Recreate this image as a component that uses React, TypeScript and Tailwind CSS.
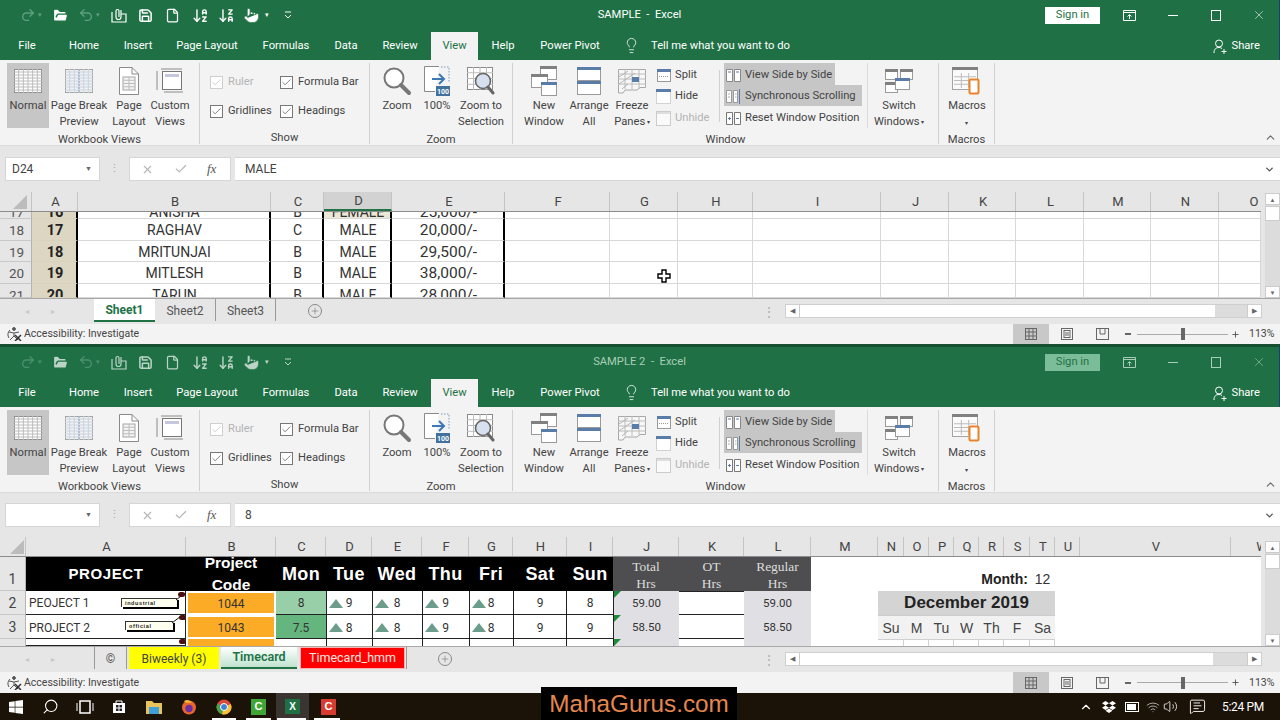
import React from "react";
import { Undo2, Redo2, FolderOpen, Save, File, ArrowDownAZ, ArrowDownZA, Pointer, Lightbulb, Search, Plus, ChevronDown, ChevronUp, Wifi, Volume2, MessageSquareText, X as XIcon, Check } from "lucide-react";
import { FaWindows, FaDropbox } from "react-icons/fa";

const blue = "#5a7ca8";

function Lines({ x, y, w, h, nx, ny, c = "#bcbcbc" }: any) {
  const out: any[] = [];
  for (let i = 1; i < nx; i++) out.push(<path key={"v" + i} d={`M${x + (w * i) / nx} ${y}V${y + h}`} stroke={c} />);
  for (let i = 1; i < ny; i++) out.push(<path key={"h" + i} d={`M${x} ${y + (h * i) / ny}H${x + w}`} stroke={c} />);
  return <>{out}</>;
}
const NormalIco = () => (
  <svg width="28" height="24" viewBox="0 0 28 24"><rect x=".5" y=".5" width="27" height="23" fill="#fff" stroke="#8f8f8f" /><Lines x={0} y={0} w={28} h={24} nx={6} ny={8} /></svg>
);
const BreakIco = () => (
  <svg width="28" height="24" viewBox="0 0 28 24"><rect x=".5" y=".5" width="27" height="23" fill="#eef2f7" stroke="#a4a4a4" /><Lines x={0} y={0} w={28} h={24} nx={6} ny={8} c="#ccd3db" /><path d="M14 0V24" stroke="#8ba3c2" strokeDasharray="2 1" /></svg>
);
const LayoutIco = () => (
  <svg width="20" height="28" viewBox="0 0 20 28"><path d="M.5.5H13L19.5 7V27.5H.5Z" fill="#fff" stroke="#8a8a8a" /><path d="M13 .5V7H19.5" fill="none" stroke="#8a8a8a" /><rect x="4" y="10" width="12" height="13" fill="#f3f3f3" stroke="#a4a4a4" /><Lines x={4} y={10} w={12} h={13} nx={2} ny={4} /></svg>
);
const CustomIco = () => (
  <svg width="28" height="26" viewBox="0 0 28 26"><path d="M1 3V22M5 1H26M27 24H8" stroke="#8a8a8a" fill="none" /><rect x="6.5" y="3.5" width="19" height="18" fill="#fff" stroke="#777" /><rect x="9" y="6" width="14" height="3" fill="#c4c7de" /></svg>
);
const ZoomIco = () => (
  <svg width="30" height="30" viewBox="0 0 30 30"><circle cx="12" cy="12" r="9.5" fill="#fff" stroke="#777" strokeWidth="2" /><path d="M19 19L27 27" stroke="#777" strokeWidth="4" strokeLinecap="round" /></svg>
);
const HundredIco = () => (
  <svg width="26" height="30" viewBox="0 0 26 30"><path d="M15 .5H.5V25.5H11" fill="#fff" stroke="#8a8a8a" /><path d="M17 1H25V17" fill="none" stroke="#7b97b8" strokeDasharray="1.5 1.5" /><path d="M8 13H20M15 8L20 13L15 18" fill="none" stroke="#3c78b5" strokeWidth="2" /><rect x="12" y="20" width="14" height="10" fill="#41719c" /><text x="19" y="28" textAnchor="middle" fontSize="7" fontWeight="700" fill="#fff">100</text></svg>
);
const SelIco = () => (
  <svg width="28" height="28" viewBox="0 0 28 28"><rect x=".5" y=".5" width="25" height="22" fill="#fff" stroke="#8a8a8a" /><Lines x={0} y={0} w={26} h={23} nx={4} ny={4} /><circle cx="16" cy="14" r="7.5" fill="#d6e0ee" stroke="#666" strokeWidth="1.6" /><path d="M21 20L26 26" stroke="#666" strokeWidth="3" strokeLinecap="round" /></svg>
);
const Win = ({ x, y, w, h, c = "#808080" }: any) => (
  <g><rect x={x + 0.5} y={y + 0.5} width={w} height={h} fill="#fff" stroke="#9a9a9a" /><rect x={x} y={y} width={w + 1} height="3" fill={c} /></g>
);
const NewWinIco = () => (
  <svg width="27" height="30" viewBox="0 0 27 30"><Win x={9} y={0} w={16} h={13} /><Win x={0} y={8} w={16} h={13} /><Win x={10} y={16} w={15} h={13} c={blue} /></svg>
);
const ArrangeIco = () => (
  <svg width="24" height="28" viewBox="0 0 24 28"><Win x={0} y={0} w={23} h={13} c={blue} /><Win x={0} y={14} w={23} h={13} c={blue} /></svg>
);
const FreezeIco = () => (
  <svg width="28" height="25" viewBox="0 0 28 25"><path d="M.5.5H27.5V18.5H22L19 21H7L5 24H.5Z" fill="#f7f7f7" stroke="#a8a8a8" /><Lines x={0} y={0} w={28} h={20} nx={4} ny={4} /><path d="M1 8L10 2M1 15L17 4M4 20L10 15" stroke="#b4b4b4" /><rect x="14" y="8" width="7" height="5" fill={blue} /></svg>
);
const SplitIco = () => (
  <svg width="14" height="13" viewBox="0 0 14 13"><rect x=".5" y=".5" width="13" height="12" fill="#fff" stroke="#9a9a9a" /><rect width="14" height="3" fill={blue} /><path d="M2 7.5H12" stroke="#999" strokeDasharray="1 1" /></svg>
);
const HideIco = () => (
  <svg width="15" height="15" viewBox="0 0 15 15"><rect x=".5" y=".5" width="14" height="14" fill="#fff" stroke="#aaa" strokeDasharray="1 1" /><rect width="15" height="3" fill={blue} /></svg>
);
const UnhideIco = () => (
  <svg width="15" height="15" viewBox="0 0 15 15"><rect x=".5" y=".5" width="14" height="14" fill="#fafafa" stroke="#cccccc" /><rect x="1" y="1" width="13" height="2" fill="#dedede" /></svg>
);
const SideIco = () => (
  <svg width="15" height="13" viewBox="0 0 15 13"><path d="M.5.5H6.5V12.5H.5ZM8.5.5H14.5V12.5H8.5Z" fill="#fff" stroke="#888" /><path d="M2 3H5M10 3H13" stroke={blue} /></svg>
);
const SyncIco = () => (
  <svg width="15" height="15" viewBox="0 0 15 15"><path d="M.5 1.5H5.5V13.5H.5ZM7.5 1.5H11.5V13.5H7.5Z" fill="#fff" stroke="#999" /><path d="M2 5H4M2 8H4M9 5H10.5M9 8H10.5" stroke="#aaa" /><path d="M13.5 0V15" stroke={blue} /></svg>
);
const ResetIco = () => (
  <svg width="15" height="13" viewBox="0 0 15 13"><path d="M.5.5H6.5V12.5H.5ZM8.5.5H14.5V12.5H8.5Z" fill="#fff" stroke="#777" /><path d="M2 6.5H5M3.5 5V8M10 6.5H13" stroke={blue} /></svg>
);
const SwitchIco = () => (
  <svg width="28" height="25" viewBox="0 0 28 25"><Win x={0} y={0} w={12} h={10} /><Win x={15} y={0} w={12} h={10} /><Win x={0} y={13} w={12} h={10} /><Win x={10} y={9} w={14} h={11} c={blue} /></svg>
);
const MacroIco = () => (
  <svg width="30" height="28" viewBox="0 0 30 28"><rect x=".5" y=".5" width="25" height="22" fill="#fafafa" stroke="#a4a4a4" /><rect width="26" height="3" fill="#808080" /><Lines x={2} y={6} w={22} h={15} nx={3} ny={4} /><rect x="17.5" y="12.5" width="9" height="14" rx="1" fill="#fff" stroke="#e8842a" strokeWidth="2" /></svg>
);

function Btn({ w, ml = 0, icon, lines, active, arrow, drop }: any) {
  return (
    <div className={`shrink-0 flex flex-col items-center h-[65px] pt-[3px] ${active ? "bg-[#c6c6c6]" : ""}`} style={{ width: w, marginLeft: ml }}>
      <div className="h-[30px] shrink-0 flex items-center justify-center">{icon}</div>
      <div className="shrink-0 mt-[2px] text-center text-[11.2px] leading-[15.5px] text-[#444] whitespace-nowrap">
        <div>{lines[0]}</div>
        <div>{lines[1]}{arrow && <span className="text-[6px] align-middle"> ▾</span>}{drop && <span className="text-[6px]">▾</span>}</div>
      </div>
    </div>
  );
}
function Group({ w, label, children }: any) {
  return (
    <div className="shrink-0 flex flex-col h-[81px] mt-[3px] border-r border-[#d0d0d0]" style={{ width: w }}>
      <div className="flex h-[65px]">{children}</div>
      <div className="h-[14px] mt-[5px] text-center text-[11.2px] leading-[14px] text-[#444]">{label}</div>
    </div>
  );
}
function Chk({ label, off }: any) {
  return (
    <div className={`flex items-center gap-[5px] text-[11.2px] ${off ? "text-[#b4b4b4]" : "text-[#444]"}`}>
      <span className={`w-[13px] h-[13px] border flex items-center justify-center bg-white ${off ? "border-[#cfcfcf]" : "border-[#777]"}`}>
        <Check size={11} strokeWidth={1.6} color={off ? "#c0c0c0" : "#555"} />
      </span>
      {label}
    </div>
  );
}
function Small({ icon, label, off, active, w }: any) {
  return (
    <div className={`h-[21.5px] pt-[3px] flex items-center gap-[4px] text-[11.2px] whitespace-nowrap ${off ? "text-[#b4b4b4]" : "text-[#444]"} ${active ? "bg-[#c6c6c6]" : ""}`} style={{ width: w }}>
      <span className="w-[15px] flex justify-center ml-[2px]">{icon}</span>
      {label}
    </div>
  );
}

function Ribbon() {
  return (
    <div className="flex h-[86px] bg-[#f3f3f3] border-b border-[#dadada]">
      <Group w={200} label="Workbook Views">
        <Btn w={42} ml={7} active icon={<NormalIco />} lines={["Normal", ""]} />
        <Btn w={54} ml={3} icon={<BreakIco />} lines={["Page Break", "Preview"]} />
        <Btn w={42} ml={2} icon={<LayoutIco />} lines={["Page", "Layout"]} />
        <Btn w={40} icon={<CustomIco />} lines={["Custom", "Views"]} />
      </Group>
      <Group w={170} label="Show">
        <div className="grid grid-cols-[70px_auto] grid-rows-[29px_29px] items-center pl-[10px] pt-[5px]">
          <Chk off label="Ruler" />
          <Chk label="Formula Bar" />
          <Chk label="Gridlines" />
          <Chk label="Headings" />
        </div>
      </Group>
      <Group w={143} label="Zoom">
        <Btn w={40} ml={7} icon={<ZoomIco />} lines={["Zoom", ""]} />
        <Btn w={40} icon={<HundredIco />} lines={["100%", ""]} />
        <Btn w={48} icon={<SelIco />} lines={["Zoom to", "Selection"]} />
      </Group>
      <Group w={426} label="Window">
        <Btn w={42} ml={10} icon={<NewWinIco />} lines={["New", "Window"]} />
        <Btn w={46} ml={1} icon={<ArrangeIco />} lines={["Arrange", "All"]} />
        <Btn w={40} icon={<FreezeIco />} lines={["Freeze", "Panes"]} arrow />
        <div className="w-[65px] ml-[2px] shrink-0 flex flex-col">
          <Small icon={<SplitIco />} label="Split" />
          <Small icon={<HideIco />} label="Hide" />
          <Small off icon={<UnhideIco />} label="Unhide" />
        </div>
        <div className="w-px h-[52px] mt-[7px] bg-[#d0d0d0] shrink-0 mr-[4px]" />
        <div className="w-[144px] shrink-0 flex flex-col border-r border-[#dcdcdc]">
          <Small active w={111} icon={<SideIco />} label="View Side by Side" />
          <Small active w={138} icon={<SyncIco />} label="Synchronous Scrolling" />
          <Small icon={<ResetIco />} label="Reset Window Position" />
        </div>
        <Btn w={48} ml={7} icon={<SwitchIco />} lines={["Switch", "Windows"]} arrow />
      </Group>
      <Group w={56} label="Macros">
        <Btn w={56} icon={<MacroIco />} lines={["Macros", ""]} drop />
      </Group>
      <div className="flex-1 flex items-end justify-end pr-[3px] pb-[1px]">
        <ChevronUp size={13} color="#666" />
      </div>
    </div>
  );
}

const tabs: [string, number][] = [["File", 54], ["Home", 60], ["Insert", 48], ["Page Layout", 90], ["Formulas", 68], ["Data", 52], ["Review", 56]];

function TitleBars({ title, dim }: any) {
  const c = dim ? "#a9cdb8" : "#ffffff";
  const q = dim ? 0.7 : 1;
  return (
    <div className="bg-[#1f7145] border-r border-[#1d3f6b]">
      <div className="h-[30px] grid grid-cols-[1fr_auto_1fr] items-center">
        <div className="flex items-center pl-[20px]" style={{ opacity: q }}>
          <Redo2 size={16} color="#5f9f7f" />
          <span className="text-[7px] text-[#5f9f7f] w-[6px] ml-[2px]">▾</span>
          <FolderOpen size={17} fill="#fff" color="#1f7145" className="ml-[8px]" />
          <Undo2 size={16} color="#5f9f7f" className="ml-[9px]" />
          <span className="text-[7px] text-[#5f9f7f] w-[6px] ml-[2px]">▾</span>
          <svg width="16" height="16" viewBox="0 0 16 16" className="ml-[9px]" fill="none" stroke="#fff" strokeWidth="1.2"><path d="M1 5V15H15V7H10" /><path d="M8 10V4a1.5 1.5 0 0 0-3 0V10a2.5 2.5 0 0 0 5 0V3" /></svg>
          <Save size={15} color="#fff" strokeWidth={2.4} className="ml-[11px]" />
          <File size={15} color="#fff" className="ml-[12px]" />
          <ArrowDownAZ size={17} color="#fff" className="ml-[12px]" />
          <ArrowDownZA size={17} color="#fff" className="ml-[9px]" />
          <Pointer size={17} fill="#fff" color="#1f7145" strokeWidth={1} className="ml-[8px]" />
          <span className="text-[7px] text-white w-[6px] ml-[5px]">▾</span>
          <svg width="8" height="8" viewBox="0 0 8 8" className="ml-[13px]" fill="none" stroke="#fff"><path d="M1 1H7M1 4L4 7L7 4" /></svg>
        </div>
        <div className="text-[11.2px] whitespace-pre pt-[1px]" style={{ color: c }}>{title}</div>
        <div className="flex items-center justify-end" style={{ color: c }}>
          <div className={`w-[55px] h-[17px] mr-[5px] flex items-center justify-center text-[11.2px] ${dim ? "bg-[#7cbd99] text-[#1f7145]" : "bg-white text-[#1f7145]"}`}>Sign in</div>
          <div className="w-[48px] flex justify-center">
            <svg width="13" height="11" viewBox="0 0 13 11" fill="none" stroke="currentColor"><path d="M.5.5H12.5V10.5H.5ZM.5 2.5H12.5M6.5 9V5M4.5 6.5L6.5 4.5L8.5 6.5" /></svg>
          </div>
          <div className="w-[40px] flex justify-center"><div className="w-[10px] h-px bg-current" /></div>
          <div className="w-[46px] flex justify-center"><div className="w-[10px] h-[11px] border border-current" /></div>
          <div className="w-[40px] flex justify-center"><XIcon size={14} strokeWidth={1} /></div>
        </div>
      </div>
      <div className="h-[30px] flex items-end text-white text-[11.2px]">
        {tabs.map(([t, w]) => (
          <div key={t} className="h-full flex items-center justify-center pt-[2px]" style={{ width: w }}>{t}</div>
        ))}
        <div className="ml-[3px] w-[47px] h-[28px] bg-[#f3f3f3] text-[#1f7145] flex items-center justify-center">View</div>
        <div className="w-[50px] h-full flex items-center justify-center pt-[2px]">Help</div>
        <div className="w-[84px] h-full flex items-center justify-center pt-[2px]">Power Pivot</div>
        <div className="w-[39px] h-full flex items-center justify-center pt-[1px]"><Lightbulb size={17} strokeWidth={1.1} /></div>
        <div className="h-full flex items-center flex-1 pt-[2px]">Tell me what you want to do</div>
        <div className="h-full flex items-center pr-[19px] gap-[4px] pt-[2px]">
          <svg width="14" height="15" viewBox="0 0 14 15" fill="none" stroke="#fff"><circle cx="6" cy="4.5" r="3.5" /><path d="M1 14C1 10 3 8.5 6 8.5C7 8.5 8 8.7 9 9.5M11 10V15M8.5 12.5H13.5" /></svg>
          Share
        </div>
      </div>
    </div>
  );
}

function FormulaBar({ name, value, pt, pb }: any) {
  return (
    <div className="bg-[#e6e6e6] flex" style={{ paddingTop: pt, paddingBottom: pb }}>
      <div className="ml-[5px] w-[95px] h-[24px] bg-white border border-[#d6d6d6] flex items-center justify-between pl-[6px] pr-[7px] text-[12px] text-[#444]">
        <span>{name}</span><span className="text-[7px] text-[#666]">▼</span>
      </div>
      <div className="w-[29px] flex items-center justify-center text-[#aaa] text-[11px] tracking-tighter">⋮</div>
      <div className="w-[102px] h-[24px] bg-white border border-[#d6d6d6] flex items-center text-[#b5b5b5]">
        <XIcon size={13} className="ml-[11px]" />
        <Check size={14} className="ml-[20px]" />
        <span className="ml-[19px] text-[13px] italic text-[#555] [font-family:'Liberation_Serif',serif]">fx</span>
      </div>
      <div className="ml-[4px] flex-1 h-[24px] bg-white border-y border-[#d6d6d6] flex items-center justify-between pl-[10px] pr-[5px] text-[12px] text-[#444]">
        <span>{value}</span><ChevronDown size={11} color="#555" strokeWidth={3} />
      </div>
    </div>
  );
}

function VScroll({ up }: any) {
  return (
    <div className="w-[19px] shrink-0 bg-[#e6e6e6] flex flex-col pl-[4px]" style={{ paddingTop: up }}>
      <div className="h-[12px] bg-white border border-[#ccc] flex items-center justify-center text-[6px] text-[#666]">▲</div>
      <div className="flex-1 flex flex-col bg-[#dcdcdc]">
        <div className="h-[15px] mt-[1px] bg-white border border-[#ccc]" />
      </div>
      <div className="h-[12px] bg-white border border-[#ccc] flex items-center justify-center text-[6px] text-[#666]">▼</div>
    </div>
  );
}

function SheetBar({ children, thumb }: any) {
  return (
    <div className="h-[26px] bg-[#e6e6e6] border-t border-[#a8a8a8] flex text-[12px]">
      <div className="w-[94px] shrink-0 flex items-center text-[#c8c8c8] text-[8px]">
        <span className="ml-[25px]">◂</span><span className="ml-[22px]">▸</span>
      </div>
      {children}
      <div className="flex-1" />
      <div className="w-[16px] mr-[8px] flex items-center justify-center text-[#aaa]">⋮</div>
      <div className="w-[477px] h-[14px] mt-[5px] flex bg-[#dcdcdc] border border-[#cfcfcf]">
        <div className="w-[14px] bg-white border-r border-[#ccc] flex items-center justify-center text-[7px] text-[#666]">◀</div>
        <div className="bg-white" style={{ width: thumb }} />
        <div className="flex-1" />
        <div className="w-[14px] bg-white border-l border-[#ccc] flex items-center justify-center text-[7px] text-[#666]">▶</div>
      </div>
      <div className="w-[18px]" />
    </div>
  );
}

function PlusCircle({ ml }: any) {
  return (
    <div className="mt-[5px] w-[14px] h-[14px] rounded-full border border-[#888] flex items-center justify-center text-[#777]" style={{ marginLeft: ml }}>
      <Plus size={10} strokeWidth={1.5} />
    </div>
  );
}

function StatusBar({ h }: any) {
  return (
    <div className="bg-[#f3f3f3] flex items-center text-[10.5px] text-[#444]" style={{ height: h }}>
      <svg width="16" height="14" viewBox="0 0 16 14" className="ml-[6px]" fill="none" stroke="#555"><circle cx="8" cy="2" r="1.4" fill="#555" /><path d="M3 5L8 6L13 5M8 6V9L4 13M8 9L12 13M4 3A6 6 0 0 0 3 11" /><path d="M9 8L15 14M15 8L9 14" stroke="#333" strokeWidth="1.5" /></svg>
      <span className="ml-[2px]">Accessibility: Investigate</span>
      <div className="flex-1" />
      <div className="w-[36px] h-full bg-[#c8c8c8] flex items-center justify-center">
        <svg width="12" height="12" viewBox="0 0 12 12"><rect x=".5" y=".5" width="11" height="11" fill="none" stroke="#666" /><Lines x={0} y={0} w={12} h={12} nx={3} ny={3} c="#666" /></svg>
      </div>
      <div className="w-[36px] flex justify-center">
        <svg width="12" height="12" viewBox="0 0 12 12" fill="none" stroke="#666"><rect x=".5" y=".5" width="11" height="11" /><rect x="3" y="2.5" width="6" height="7" /><path d="M4 5H8M4 7H8" /></svg>
      </div>
      <div className="w-[34px] flex justify-center">
        <svg width="13" height="12" viewBox="0 0 13 12" fill="none" stroke="#666"><rect x=".5" y=".5" width="12" height="11" /><path d="M4 .5V6H9V.5" /></svg>
      </div>
      <div className="w-[18px] flex justify-center"><div className="w-[6px] h-[2px] bg-[#666]" /></div>
      <div className="w-[91px] relative flex items-center"><div className="h-px w-full bg-[#aaa]" /><div className="absolute left-[44px] w-[4px] h-[12px] bg-[#666]" /></div>
      <div className="w-[14px] flex justify-center"><Plus size={9} color="#555" strokeWidth={2.5} /></div>
      <div className="w-[38px] pl-[7px] overflow-hidden whitespace-nowrap">113%</div>
    </div>
  );
}

function Header({ cols }: { cols: [string, number, boolean?][] }) {
  return (
    <div className="flex h-[20px] overflow-hidden bg-[#e6e6e6] border-b border-[#8c8c8c] text-[13px] text-[#444]">
      {cols.map(([n, w, hi], i) =>
        <div key={i} className={`shrink-0 overflow-hidden flex items-center justify-center pl-[2px] ${i === cols.length - 1 ? "" : "border-r border-[#c4c4c4]"} ${hi ? "bg-[#d2d2d2] border-b-2 border-b-[#217346]" : ""}`} style={{ width: w }}>
          {n === "" ? (
            <svg width="16" height="16" viewBox="0 0 16 16" className="ml-[6px]"><path d="M15 1V15H1Z" fill="#bcbcbc" /></svg>
          ) : n}
        </div>
      )}
    </div>
  );
}

const s1cols: [string, number, boolean?][] = [["", 32], ["A", 46], ["B", 193], ["C", 53], ["D", 68, true], ["E", 113], ["F", 105], ["G", 68], ["H", 75], ["I", 128], ["J", 68], ["K", 67], ["L", 68], ["M", 67], ["N", 68], ["O", 68]];
const s1rows: [string, string, string, string, string, string, number, string][] = [
  ["17", "16", "ANISHA", "B", "FEMALE", "25,000/-", 7, "end"],
  ["18", "17", "RAGHAV", "C", "MALE", "20,000/-", 22, "center"],
  ["19", "18", "MRITUNJAI", "B", "MALE", "29,500/-", 21, "center"],
  ["20", "19", "MITLESH", "B", "MALE", "38,000/-", 22, "center"],
  ["21", "20", "TARUN", "B", "MALE", "28,000/-", 14, "start"],
];

function C1({ w, h, al, children, cls = "" }: any) {
  const j = al === "end" ? "justify-end" : al === "start" ? "justify-start" : "justify-center";
  return (
    <div className={`shrink-0 overflow-hidden flex flex-col border-b ${j} ${cls}`} style={{ width: w, height: h }}>
      <div className={`h-[21px] shrink-0 leading-[21px] text-center whitespace-nowrap pl-[2px] ${al === "end" ? "-mb-[5px]" : al === "start" ? "mt-[1px]" : "pt-[1px]"}`}>{children}</div>
    </div>
  );
}

function Sheet1() {
  return (
    <div className="flex h-[106px]">
      <div className="w-[1261px] shrink-0">
        <Header cols={s1cols} />
        <div className="relative h-[86px] bg-white text-[14px] text-[#333] overflow-hidden">
          {s1rows.map(([rn, id, name, g, sex, sal, h, al]) => (
            <div key={rn} className="flex">
              <C1 w={32} h={h} al={al} cls="bg-[#e6e6e6] border-[#c8c8c8] border-r border-r-[#b4b4b4] text-[#555] text-[13.5px]">{rn}</C1>
              <C1 w={46} h={h} al={al} cls="bg-[#dcd6c3] border-b-[#d8d2bf] border-r-2 border-r-black font-bold text-[14.5px] text-[#222]">{id}</C1>
              <C1 w={193} h={h} al={al} cls="border-[#d8d8d8] border-r-2 border-r-black">{name}</C1>
              <C1 w={53} h={h} al={al} cls="border-[#d8d8d8] border-r-2 border-r-black">{g}</C1>
              <C1 w={68} h={h} al={al} cls={`border-[#d8d8d8] border-r-2 border-r-black ${rn === "17" ? "bg-[#ece8d8]" : ""}`}>{sex}</C1>
              <C1 w={113} h={h} al={al} cls="border-[#d8d8d8] border-r-2 border-r-black text-[15.5px]">{sal}</C1>
              {[105, 68, 75, 128, 68, 67, 68, 67, 68, 42].map((w, i) => (
                <div key={i} className="shrink-0 border-r border-b border-[#d8d8d8]" style={{ width: w, height: h }} />
              ))}
            </div>
          ))}
          <svg width="14" height="14" viewBox="0 0 14 14" className="absolute left-[657px] top-[57px]"><path d="M5 1H9V5H13V9H9V13H5V9H1V5H5Z" fill="#fff" stroke="#000" strokeWidth="1.4" /></svg>
        </div>
      </div>
      <VScroll up={1} />
    </div>
  );
}

const s2head: [string, number][] = [["", 26], ["A", 160], ["B", 90], ["C", 50], ["D", 46], ["E", 50], ["F", 47], ["G", 44], ["H", 54], ["I", 46], ["J", 66], ["K", 65], ["L", 67], ["M", 67], ["N", 26], ["O", 25], ["P", 25], ["Q", 25], ["R", 25], ["S", 26], ["T", 25], ["U", 25], ["V", 151], ["W", 60]];

const Tri = () => <svg width="14" height="9" viewBox="0 0 14 9" className="ml-[2px]"><path d="M7 0L14 9H0Z" fill="#6c9c8a" /></svg>;
const Corner = () => <svg width="7" height="7" viewBox="0 0 7 7" className="absolute left-0 top-0"><path d="M0 0H7L0 7Z" fill="#1f8a3c" /></svg>;

function Note({ label, left, top, w, dotLeft, dotTop }: any) {
  return (
    <>
      <div className="absolute h-[9px] bg-[#fffff0] border-t border-l border-[#333] shadow-[2px_2px_0_#000] text-[5.5px] leading-[8px] font-bold text-[#222] pl-[3px] tracking-[0.6px] [font-family:'Liberation_Sans',sans-serif]" style={{ left, top, width: w }}>{label}</div>
      <svg width="10" height="10" viewBox="0 0 10 10" className="absolute" style={{ left: left + w - 1, top: top - 6 }}><path d="M0 8L9 1" stroke="#111" /></svg>
      <div className="absolute w-[7px] h-[5px] bg-[#4a0f10] rounded-full" style={{ left: dotLeft, top: dotTop }} />
    </>
  );
}

function ARow({ label, note, cls = "" }: any) {
  return (
    <div className={`relative flex items-center pl-[3px] text-[12px] text-[#333] border-r border-b border-[#222] bg-white overflow-hidden ${cls}`}>
      {label}{note}
    </div>
  );
}

function Sheet2() {
  const vals = [
    { code: "1044", mon: "8", bg: "#98cfa9", mid: ["9", "8", "9", "8"], sat: "9", sun: "8", tot: "59.00", pad: "pt-[1px]" },
    { code: "1043", mon: "7.5", bg: "#65b57e", mid: ["8", "8", "9", "8"], sat: "9", sun: "9", tot: "58.50", pad: "pt-[2px]" },
  ];
  const days = ["Su", "M", "Tu", "W", "Th", "F", "Sa"];
  const head = "bg-black text-white font-bold flex items-center justify-center [font-family:'Liberation_Sans',sans-serif]";
  const head2 = "bg-[#4e4e50] text-[#ddd] text-[13.5px] leading-[17px] text-center flex flex-col justify-center pt-[2px] [font-family:'Liberation_Serif',serif]";
  return (
    <div className="flex h-[109px]">
      <div className="w-[1261px] shrink-0">
        <Header cols={s2head} />
        <div className="flex h-[89px] bg-white overflow-hidden">
          <div className="w-[26px] shrink-0 bg-[#e6e6e6] text-[14px] text-[#444] grid grid-rows-[34px_24px_24px_7px] border-r border-[#b4b4b4]">
            <div className="flex items-end justify-center border-b border-[#c8c8c8]">1</div>
            <div className="flex items-center justify-center border-b border-[#c8c8c8] pt-[1px]">2</div>
            <div className="flex items-center justify-center border-b border-[#c8c8c8] pt-[2px]">3</div>
            <div />
          </div>
          <div className="grid grid-cols-[160px_90px_50px_46px_50px_47px_44px_54px_46px_66px_65px_67px_67px_26px_25px_25px_25px_25px_26px_25px_25px_151px_30px] grid-rows-[34px_24px_24px_7px] text-[12px] text-[#333] overflow-hidden">
            <div className={`${head} text-[15px] tracking-[0.6px]`}>PROJECT</div>
            <div className={`${head} text-[15.5px] leading-[22px] flex-col text-center`}><span>Project</span><span>Code</span></div>
            {["Mon", "Tue", "Wed", "Thu", "Fri", "Sat", "Sun"].map((d) => <div key={d} className={`${head} text-[18px] tracking-[0.4px]`}>{d}</div>)}
            <div className={head2}><span>Total</span><span>Hrs</span></div>
            <div className={head2}><span>OT</span><span>Hrs</span></div>
            <div className={head2}><span>Regular</span><span>Hrs</span></div>
            <div />
            <div className="col-span-6 flex items-end justify-end pb-[1px] pr-[2px] font-bold text-[14px] text-[#222] [font-family:'Liberation_Sans',sans-serif]">Month:</div>
            <div className="flex items-end justify-center pb-[1px] text-[14px] text-[#333] [font-family:'Liberation_Sans',sans-serif]">12</div>
            <div /><div /><div />

            {vals.map((r, i) => (
              <React.Fragment key={i}>
                <ARow cls={r.pad} label={i === 0 ? "PEOJECT 1" : "PROJECT 2"} note={i === 0
                  ? <Note label="industrial" left={95} top={7} w={56} dotLeft={152} dotTop={1} />
                  : <Note label="official" left={99} top={6} w={48} dotLeft={153} dotTop={0} />} />
                <div className={`bg-[#fbab26] border-2 border-white flex items-center justify-center ${r.pad}`}>{r.code}</div>
                <div className={`border-b border-[#222] flex items-center justify-center ${r.pad}`} style={{ backgroundColor: r.bg }}>{r.mon}</div>
                {r.mid.map((v: string, j: number) => (
                  <div key={j} className={`grid grid-cols-[1fr_auto_1fr] items-center border-l border-b border-[#222] ${r.pad}`}><Tri /><span className="-ml-px">{v}</span><span /></div>
                ))}
                <div className={`border-x border-b border-[#222] flex items-center justify-center ${r.pad}`}>{r.sat}</div>
                <div className={`border-b border-[#222] flex items-center justify-center ${r.pad}`}>{r.sun}</div>
                <div className={`relative bg-[#e0e0e4] border-l border-[#222] flex items-center justify-center text-[11.5px] ${r.pad}`}><Corner />{r.tot}</div>
                <div className={`border-b border-[#222] ${i === 0 ? "border-t" : ""}`} />
                <div className={`bg-[#e0e0e4] flex items-center justify-center text-[11.5px] ${r.pad}`}>{r.tot}</div>
                <div />
                {i === 0 ? (
                  <div className="col-span-7 bg-[#d4d4d4] flex items-center justify-center font-bold text-[17px] text-[#222] [font-family:'Liberation_Sans',sans-serif]">December 2019</div>
                ) : (
                  days.map((d) => <div key={d} className="bg-[#f2f2f2] border-t border-[#ccc] flex items-center justify-center pt-[1px] text-[14px] text-[#444] [font-family:'Liberation_Sans',sans-serif]">{d}</div>)
                )}
                <div /><div /><div />
              </React.Fragment>
            ))}

            <ARow label="" note={<div className="absolute left-[153px] top-0 w-[7px] h-[5px] bg-[#4a0f10] rounded-full" />} />
            <div className="bg-[#fbab26] border-x-2 border-white" />
            <div />
            {[0, 1, 2, 3].map((i) => <div key={i} className="border-l border-[#222]" />)}
            <div className="border-x border-[#222]" />
            <div />
            <div className="relative bg-[#e0e0e4] border-l border-[#222]"><Corner /></div>
            <div />
            <div className="bg-[#e0e0e4]" />
            <div />
            {days.map((d) => <div key={d} className="border-t border-r border-[#d0d0d0]" />)}
            <div /><div /><div />
          </div>
        </div>
      </div>
      <VScroll up={4} />
    </div>
  );
}

function Tab({ w, ml = 0, cls = "", children }: any) {
  return <div className={`shrink-0 h-[22px] pt-[1px] flex items-center justify-center ${cls}`} style={{ width: w, marginLeft: ml }}>{children}</div>;
}

function Taskbar() {
  const under = "absolute bottom-0 h-[2px] bg-white";
  return (
    <div className="relative h-[27px] bg-[#1b1208] flex items-center text-white">
      <FaWindows size={16} className="ml-[8px]" />
      <Search size={17} strokeWidth={1.5} className="ml-[18px] -scale-x-100" />
      <svg width="18" height="14" viewBox="0 0 18 14" className="ml-[17px]" fill="none" stroke="#fff"><rect x="4" y="1" width="10" height="12" strokeWidth="1.5" /><path d="M1 3V11M17 3V11" /></svg>
      <svg width="14" height="15" viewBox="0 0 14 15" className="ml-[18px]"><path d="M1 4H13V14H1Z" fill="#fff" /><path d="M4 4V2H10V4" fill="none" stroke="#fff" /><rect x="4" y="6" width="2.5" height="2.5" fill="#222" /><rect x="7.5" y="6" width="2.5" height="2.5" fill="#222" /><rect x="4" y="9.5" width="2.5" height="2.5" fill="#222" /><rect x="7.5" y="9.5" width="2.5" height="2.5" fill="#222" /></svg>
      <svg width="16" height="14" viewBox="0 0 16 14" className="ml-[20px]"><path d="M0 1H6L8 3H16V14H0Z" fill="#e8c25a" /><rect x="3" y="7" width="10" height="7" fill="#3f9fd8" /></svg>
      <svg width="16" height="16" viewBox="0 0 16 16" className="ml-[19px]"><circle cx="8" cy="8.5" r="7" fill="#e8662a" /><circle cx="8" cy="9.5" r="3.7" fill="#6b2fa0" /><path d="M3 2C5 5 8 3 11 4C9 1 6 0 3 2Z" fill="#f7b733" /></svg>
      <svg width="16" height="16" viewBox="0 0 16 16" className="ml-[19px]"><circle cx="8" cy="8" r="7.5" fill="#d9493a" /><path d="M8 8L1.5 4.5A7.5 7.5 0 0 0 6 15.3Z" fill="#47a44a" /><path d="M8 8L14.8 5A7.5 7.5 0 0 1 6 15.3Z" fill="#f6c434" /><circle cx="8" cy="8" r="3.5" fill="#3f80d8" stroke="#fff" /></svg>
      <div className="ml-[19px] w-[15px] h-[16px] bg-[#3fa535] flex items-center justify-center text-[11px] font-bold [font-family:'Liberation_Sans',sans-serif]">C</div>
      <div className="ml-[10px] w-[33px] h-full bg-[#3a3530] flex items-center justify-center">
        <div className="w-[15px] h-[15px] bg-[#1f7145] flex items-center justify-center text-[10px] font-bold [font-family:'Liberation_Sans',sans-serif]">X</div>
      </div>
      <div className="ml-[12px] w-[15px] h-[16px] bg-[#d83b30] flex items-center justify-center text-[11px] font-bold [font-family:'Liberation_Sans',sans-serif]">C</div>
      <div className={`${under} left-[212px] w-[24px]`} />
      <div className={`${under} left-[246px] w-[25px]`} />
      <div className={`${under} left-[277px] w-[29px]`} />
      <div className={`${under} left-[314px] w-[26px]`} />
      <div className="flex-1" />
      <ChevronUp size={14} />
      <FaDropbox size={14} className="ml-[9px]" />
      <svg width="14" height="10" viewBox="0 0 14 10" className="ml-[9px]"><rect x=".5" y=".5" width="13" height="9" fill="none" stroke="#fff" /><rect x="2" y="2" width="9" height="6" fill="#fff" /></svg>
      <Wifi size={14} strokeWidth={1.5} className="ml-[7px] text-[#bbb]" />
      <Volume2 size={15} strokeWidth={1.3} className="ml-[3px]" />
      <MessageSquareText size={17} strokeWidth={1.3} className="ml-[11px]" />
      <div className="ml-[16px] mr-[16px] text-[12px] tracking-[-0.3px]">5:24 PM</div>
    </div>
  );
}

export default function App() {
  return (
    <div className="relative w-[1280px] h-[720px] overflow-hidden bg-[#e6e6e6] [font-family:Roboto,sans-serif]">
      <TitleBars title="SAMPLE  -  Excel" />
      <Ribbon />
      <FormulaBar name="D24" value="MALE" pt={11} pb={11} />
      <Sheet1 />
      <SheetBar thumb={415}>
        <Tab w={61} cls="bg-white text-[#217346] font-bold border-b-2 border-[#217346] h-[23px]">Sheet1</Tab>
        <Tab w={61} cls="text-[#555] border-r border-[#999]">Sheet2</Tab>
        <Tab w={60} cls="text-[#555] border-r border-[#999]">Sheet3</Tab>
        <PlusCircle ml={32} />
      </SheetBar>
      <StatusBar h={20} />
      <div className="h-[3px] bg-[#174f32]" />
      <TitleBars title="SAMPLE 2  -  Excel" dim />
      <Ribbon />
      <FormulaBar name="" value="8" pt={10} pb={10} />
      <Sheet2 />
      <SheetBar thumb={413}>
        <Tab w={33} cls="border-x border-[#999] text-[#555]">©</Tab>
        <Tab w={90} ml={2} cls="bg-[#ffff00] text-[#444]">Biweekly (3)</Tab>
        <Tab w={76} ml={2} cls="bg-gradient-to-b from-white to-[#bfe3cf] text-[#217346] font-semibold text-[12.5px] border-b-2 border-[#217346]">Timecard</Tab>
        <Tab w={105} ml={3} cls="bg-[#ff0000] text-[#ffe9e0] border border-[#ffb0b0] text-[12.5px]">Timecard_hmm</Tab>
        <div className="w-px h-[22px] ml-[1px] bg-[#999]" />
        <PlusCircle ml={31} />
      </SheetBar>
      <StatusBar h={21} />
      <Taskbar />
      <div className="absolute left-[541px] top-[687px] w-[196px] h-[33px] bg-black flex items-center justify-center pt-[1px] text-[24.3px] text-[#e5864e] [font-family:'Liberation_Sans',sans-serif]">MahaGurus.com</div>
    </div>
  );
}
